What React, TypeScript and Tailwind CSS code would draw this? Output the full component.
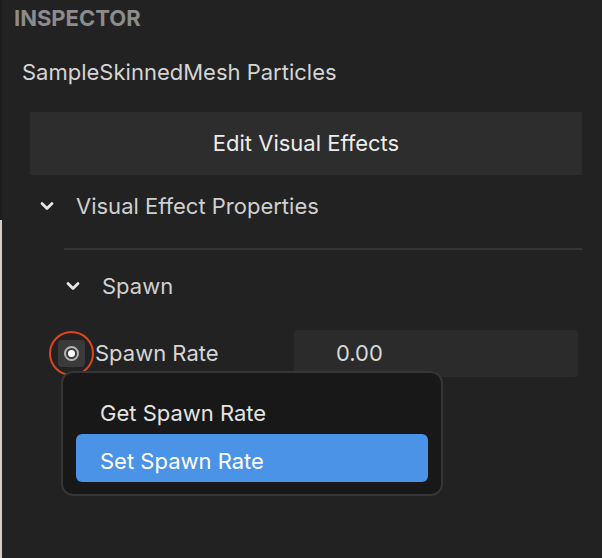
import React from 'react';

const Chevron = ({ className = '' }: { className?: string }) => (
  <svg viewBox="0 0 14 10" className={className} fill="none">
    <path d="M2 2.5 L7 7.5 L12 2.5" stroke="#e6e6e6" strokeWidth="2.8" strokeLinecap="round" strokeLinejoin="round" />
  </svg>
);

const MenuItem = ({ label, active }: { label: string; active?: boolean }) => (
  <div
    className={
      active
        ? 'h-[48px] flex items-center pl-[24px] pt-[6px] rounded-[6px] bg-[#4b93e6] text-white'
        : 'h-[44px] flex items-center pl-[24px] pt-[2px] rounded-[6px] text-[#e4e4e4]'
    }
  >
    {label}
  </div>
);

export default function App() {
  return (
    <div
      className="w-[602px] h-[558px] bg-[#222222] flex overflow-hidden text-[#d6d6d6]"
      style={{ fontFamily: 'Inter, "Noto Sans", sans-serif' }}
    >
      <div className="w-[2px] flex flex-col shrink-0">
        <div className="h-[220px] bg-[#1c1c1c]" />
        <div className="flex-1 bg-[#d5cfc1]" />
      </div>

      <div className="flex-1 flex flex-col text-[22px]">
        <div className="pl-[12px] pt-[3px] h-[36px] leading-[30px] font-bold text-[#8c8c8c]">
          INSPECTOR
        </div>
        <div className="pl-[20px] h-[72px] flex items-center text-[#d4d4d4]">
          SampleSkinnedMesh Particles
        </div>
        <div className="ml-[28px] mr-[20px] mt-[4px] h-[63px] bg-[#2d2d2d] flex items-center justify-center text-[#ececec]">
          Edit Visual Effects
        </div>

        <div className="h-[62px] flex items-center pl-[38px]">
          <Chevron className="w-[14px] h-[10px]" />
          <span className="ml-[22px] text-[#d0d0d0]">Visual Effect Properties</span>
        </div>
        <div className="ml-[62px] mr-[20px] mt-[11px] h-[2px] bg-[#363636]" />

        <div className="h-[72px] flex items-center pl-[64px]">
          <Chevron className="w-[14px] h-[10px]" />
          <span className="ml-[22px] text-[#d0d0d0]">Spawn</span>
        </div>

        <div className="relative flex items-center h-[47px] mt-[8px]">
          <div className="ml-[56px] w-[27px] h-[27px] rounded-[4px] bg-[#3a3a3a] flex items-center justify-center">
            <div className="w-[15px] h-[15px] rounded-full border-[2px] border-[#b4b4b4] flex items-center justify-center">
              <div className="w-[7px] h-[7px] rounded-full bg-white" />
            </div>
          </div>
          <span className="ml-[10px] text-[#d6d6d6]">Spawn Rate</span>
          <div className="ml-auto mr-[24px] w-[284px] h-[47px] rounded-[4px] bg-[#2b2b2b] flex items-center pl-[42px] text-[#d8d8d8]">
            0.00
          </div>

          <div className="absolute left-[47px] top-[1px] w-[45px] h-[45px] rounded-full border-[2.5px] border-[#e2431f]" />

          <div className="absolute left-[59px] top-[41px] w-[382px] h-[125px] rounded-[12px] bg-[#181818] border-[2px] border-[#353535] px-[13px] pt-[17px]">
            <MenuItem label="Get Spawn Rate" />
            <MenuItem label="Set Spawn Rate" active />
          </div>
        </div>
      </div>
    </div>
  );
}
